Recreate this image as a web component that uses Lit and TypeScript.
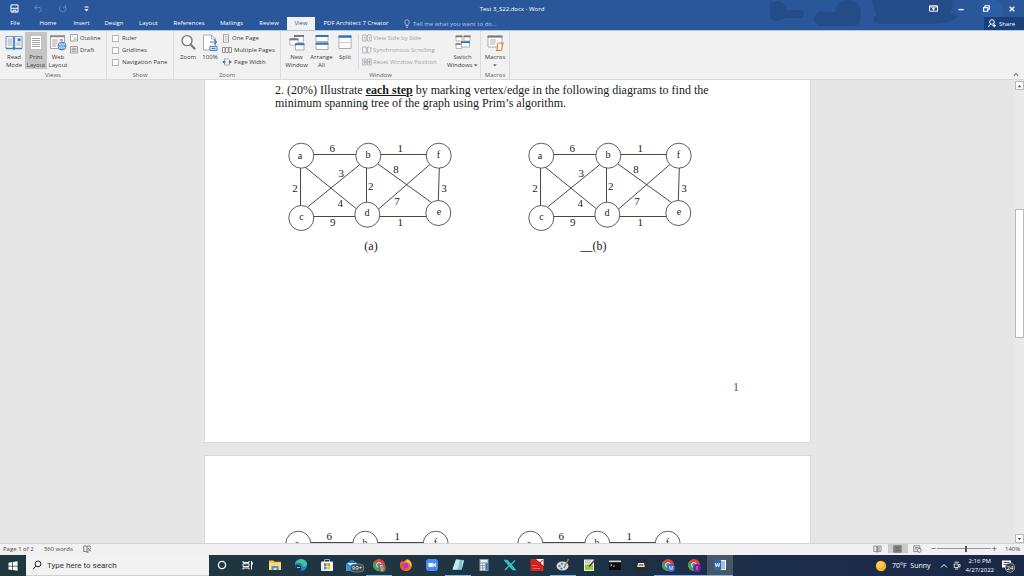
import { LitElement, html, svg, css, TemplateResult } from "lit";
import { customElement, property } from "lit/decorators.js";
import { classMap } from "lit/directives/class-map.js";

const icon = (w: number, h: number, body: unknown) =>
  html`<svg class="icon" width=${w} height=${h} viewBox="0 0 ${w} ${h}" aria-hidden="true">${body}</svg>`;

const I: Record<string, TemplateResult> = {
  save: icon(9, 9, svg`<path d="M1 .9h7v7.2H1z" fill="none" stroke="#fff"/><path d="M1 4.3h7M3 8V6.2h3V8" fill="none" stroke="#fff"/>`),
  undo: icon(10, 9, svg`<path d="M4 1L1.5 3.4 4 6M2 3.4h4a2 2 0 0 1 0 4.6" fill="none" stroke="#5f86c2"/>`),
  redo: icon(9, 9, svg`<path d="M7 2.2A3.3 3.3 0 1 1 3 1.8M4.8 3.8H7.4V.8" fill="none" stroke="#5f86c2"/>`),
  qat: icon(5, 6, svg`<path d="M.5 1h4" stroke="#fff"/><path d="M.5 3h4L2.5 5.4z" fill="#fff"/>`),
  ribbonOpts: icon(9, 7, svg`<path d="M.5.8h8v5.4h-8z" fill="none" stroke="#fff"/><path d="M1 2h7M4.5 5.4V3M3 4.2L4.5 3 6 4.2" stroke="#fff" fill="none"/>`),
  min: icon(6, 6, svg`<path d="M.5 3.6h5" stroke="#fff" stroke-width="1.4"/>`),
  restore: icon(7, 7, svg`<path d="M.6 2.6h4.2v3.6H.6zM2 2.4V.8h4.3v3.5H5" fill="none" stroke="#fff" stroke-width="1.1"/>`),
  close: icon(6, 6, svg`<path d="M.7.7l4.6 4.6M5.3.7L.7 5.3" stroke="#fff" stroke-width="1.3"/>`),
  share: icon(8, 9, svg`<circle cx="4" cy="3" r="2.3" fill="none" stroke="#fff"/><path d="M.6 8c.2-1.6 1.2-2.6 2.4-2.8M6.2 4.8v3.6M4.4 6.6H8" fill="none" stroke="#fff"/>`),
  bulb: icon(6, 9, svg`<path d="M2 5.6C.2 4 .6 .7 3 .7s2.8 3.300 1 4.900v1H2zM2 8.200h2" fill="none" stroke="#c3d2ea" stroke-width=".8"/>`),
  read: icon(18, 17, svg`<path d="M1 2.500h7.200v12H1zM9.800 2.500H17v12H9.800z" fill="#fff" stroke="#4a86c0" stroke-width=".8"/><path d="M1 14.500h16M9 2v14" stroke="#3f7fbf" stroke-width="1.400"/><path d="M2.500 5h4.500M2.500 7h4.500M2.500 9h4.500M2.500 11h4.500M11.200 9h4.500M11.200 11h4.500" stroke="#8b8b8b" stroke-width=".8"/><path d="M12.500 4.300h3.200v3h-3.200z" fill="#3f7fbf"/>`),
  print: icon(18, 17, svg`<path d="M3.500 1.500h11v14h-11z" fill="#fff" stroke="#b5b5b5" stroke-width=".7"/><path d="M5 4.500h8M5 6.500h8M5 8.500h8M5 10.500h8M5 12.500h8" stroke="#8b8b8b" stroke-width=".8"/>`),
  web: icon(18, 17, svg`<path d="M1.500 1.500h14v13h-14z" fill="#fff" stroke="#8f8f8f" stroke-width=".8"/><path d="M1 2.500h15" stroke="#8f8f8f" stroke-width="1.600"/><path d="M3 6h6M3 8h6M3 10h5M3 12h4" stroke="#8b8b8b" stroke-width=".8"/><path d="M10.500 5h3.500v2h-3.500z" fill="#aaa"/><circle cx="13" cy="12" r="4" fill="#fff" stroke="#3f7fbf"/><path d="M9 12h8M13 8v8M13 8c-3 3-3 5 0 8M13 8c3 3 3 5 0 8" fill="none" stroke="#3f7fbf" stroke-width=".8"/>`),
  outline: icon(8, 8, svg`<path d="M.5.5h7v6.500h-7z" fill="#fff" stroke="#8b8b8b" stroke-width=".8"/><path d="M1.800 2.400h1M3.600 4h3M3.600 5.400h3" stroke="#9b9b9b" stroke-width=".7"/>`),
  draft: icon(8, 8, svg`<path d="M.5.5h7v6.500h-7z" fill="#fff" stroke="#8b8b8b" stroke-width=".8"/><path d="M1.500 2.200h5M1.500 3.800h5M1.500 5.200h5" stroke="#8b8b8b"/>`),
  zoom: icon(18, 17, svg`<circle cx="8" cy="6.600" r="5" fill="#fafafa" stroke="#7b7b7b" stroke-width="1.400"/><path d="M11.600 10.400l4.600 4.800" stroke="#7b7b7b" stroke-width="2.200"/>`),
  hundred: icon(18, 17, svg`<path d="M2.500 1h8l4 4v11h-12z" fill="#fff" stroke="#9b9b9b" stroke-width=".8"/><path d="M10.500 1v4h4" fill="none" stroke="#9b9b9b" stroke-width=".8"/><path d="M9 8h6M13 5.500L15.500 8 13 10.500" fill="none" stroke="#3f7fbf" stroke-width="1.200"/><path d="M9 12.400h7v4H9z" fill="#fff" stroke="#3f7fbf"/><path d="M10.500 13.700h4v1.500h-4z" fill="#3f7fbf"/>`),
  onePage: icon(8, 9, svg`<path d="M1.500.6h5v7.600h-5z" fill="#fff" stroke="#8b8b8b" stroke-width=".8"/><path d="M2.600 2.500h3M2.600 4.200h3M2.600 6h3" stroke="#9b9b9b" stroke-width=".7"/>`),
  multi: icon(10, 8, svg`<path d="M.5 1.500h2.500v5H.5zM3.700 1.500h2.500v5H3.700zM7 1.500h2.500v5H7z" fill="#fff" stroke="#777" stroke-width=".8"/>`),
  pageWidth: icon(10, 8, svg`<path d="M2.600.8h3.600l1.300 1.400V7H2.600z" fill="#fff" stroke="#999" stroke-width=".8"/><path d="M3 2.400L.8 4 3 5.600M7 2.400L9.200 4 7 5.600M.8 4h3M6.400 4h2.800" fill="none" stroke="#2e6fb3" stroke-width=".9"/>`),
  newWin: icon(18, 17, svg`<path d="M6.500 1.500h9v7h-9z" fill="#fff" stroke="#aaa" stroke-width=".8"/><path d="M6 2h10" stroke="#777" stroke-width="2"/><path d="M2 5h8v6H2z" fill="#fff" stroke="#aaa" stroke-width=".8"/><path d="M1.600 5.300h9" stroke="#777" stroke-width="2"/><path d="M7.500 10h8.500v6H7.500z" fill="#fff" stroke="#999" stroke-width=".8"/><path d="M7 10.200h9.400" stroke="#2e75b6" stroke-width="2"/>`),
  arrange: icon(18, 17, svg`<path d="M3 1.500h12v6H3zM3 9.500h12v6H3z" fill="#fff" stroke="#999" stroke-width=".8"/><path d="M2.600 2h12.800M2.600 9.600h12.800" stroke="#2e75b6" stroke-width="2.200"/>`),
  split: icon(18, 17, svg`<path d="M3 2h12v12.500H3z" fill="#fff" stroke="#999" stroke-width=".8"/><path d="M2.600 2.600h12.800" stroke="#2e75b6" stroke-width="2.400"/><path d="M3.500 8.500h11" stroke="#c4c4c4" stroke-width=".8"/>`),
  side: icon(10, 8, svg`<path d="M.6 1h3.600v6H.6zM5.600 1h3.600v6H5.600z" fill="#f7f5f8" stroke="#aaa2ae" stroke-width=".8"/><path d="M2 3.500h1M7 3.500h1M2 5h1M7 5h1" stroke="#aaa2ae"/>`),
  sync: icon(10, 8, svg`<path d="M.6 1h3.600v6H.6zM7.800 1H5.600v6h2.200" fill="#f7f5f8" stroke="#aaa2ae" stroke-width=".8"/><path d="M8.800 1.500v5M8 2.500l.8-1.200.8 1.200" fill="none" stroke="#aaa2ae" stroke-width=".8"/>`),
  reset: icon(10, 8, svg`<path d="M.6 1h3.600v6H.6zM5.600 1h3.600v6H5.600z" fill="#f7f5f8" stroke="#aaa2ae" stroke-width=".8"/><path d="M2.500 2v4M7.400 2v4M1 4h8" stroke="#aaa2ae" stroke-width=".8"/>`),
  switchWin: icon(18, 17, svg`<path d="M2 2h6v5H2zM10 2h6v5h-6zM2 10h6v4.500H2z" fill="#fff" stroke="#aaa" stroke-width=".8"/><path d="M1.600 2.400h6.800M9.600 2.400h6.800M1.600 10h5" stroke="#777" stroke-width="1.600"/><path d="M7.500 8h8v5h-8z" fill="#fff" stroke="#999" stroke-width=".8"/><path d="M7 8.200h9" stroke="#2e75b6" stroke-width="1.800"/>`),
  macros: icon(18, 17, svg`<path d="M2 2h14v11H2z" fill="#fff" stroke="#999" stroke-width=".8"/><path d="M1.600 2.600h14.800" stroke="#777" stroke-width="2"/><path d="M4 6h6M4 8h6M4 10h5" stroke="#999" stroke-width=".8"/><path d="M12.500 9h4.500v1h-1v4.500c0 1.500-.8 2-1.500 2h-4.500c1.500-.5 1.500-1.500 1.500-2.500v-3.500c0-1 .4-1.500 1-1.500z" fill="#fff" stroke="#ed7d31" stroke-width="1.100"/>`),
  collapse: icon(6, 5, svg`<path d="M1 3.800L3 1.600l2 2.200" fill="none" stroke="#777" stroke-width="1.100"/>`),
  up: icon(5, 4, svg`<path d="M.6 3.200h3.800L2.500 1z" fill="#555"/>`),
  down: icon(5, 4, svg`<path d="M.6 1h3.800L2.500 3.200z" fill="#555"/>`),
  proof: icon(9, 8, svg`<path d="M4 1.500C3 .8 2 .8.800 1v5.500c1.200-.2 2.200 0 3.200.6zM4 1.500C5 .8 6 .8 7.200 1v1.500M4 7.200h1.500M5 3.200l3 3.300M8 3.200L5 6.500" fill="none" stroke="#555" stroke-width=".8"/>`),
  vRead: icon(9, 8, svg`<path d="M.800 1h3v5.600h-3zM5 1h3v5.600H5zM4.400 1v6.500" fill="none" stroke="#777" stroke-width=".8"/><path d="M6 3h1M6 5h1" stroke="#777"/>`),
  vPrint: icon(9, 8, svg`<path d="M.800.8h7.400v6.400H.8z" fill="#8a8a8a" stroke="#666" stroke-width=".8"/><path d="M2.400 2.500h4.200M2.400 4h4.200M2.400 5.500h4.200" stroke="#5a5a5a" stroke-width=".8"/>`),
  vWeb: icon(9, 8, svg`<path d="M.800.8h6v5.800h-6zM2 2.500h3.500M2 4h2.500" fill="none" stroke="#777" stroke-width=".8"/><circle cx="6.300" cy="5.300" r="1.900" fill="#f0f0f0" stroke="#666" stroke-width=".8"/>`),
  win: icon(10, 10, svg`<path d="M.5 1.700l3.800-.6v3.600H.5zM5 1l4.600-.7v4.400H5zM.5 5.400h3.800V9L.5 8.400zM5 5.400h4.600v4.400L5 9.100z" fill="#fff"/>`),
  search: icon(10, 10, svg`<circle cx="6" cy="3.900" r="2.900" fill="none" stroke="#222"/><path d="M3.900 6L1 9.200" stroke="#222"/>`),
  sun: icon(12, 12, svg`<circle cx="6" cy="6" r="5.200" fill="#fbb02a"/><circle cx="5" cy="4.800" r="3.400" fill="#ffcf4a"/>`),
  chevron: icon(8, 6, svg`<path d="M1 4.500L4 1.500l3 3" fill="none" stroke="#fff"/>`),
  meet: icon(8, 9, svg`<path d="M1.500 1.200h4.500M1.200 3h4v3.500h-4zM5.500 4l1.500-.8v3L5.500 5.500M2 8h3.500" fill="none" stroke="#fff" stroke-width=".8"/>`),
  notify: icon(15, 14, svg`<path d="M1 1.500h9v7H6L4 10.500v-2H1z" fill="#fff"/><path d="M2.500 3.500h6M2.500 5.500h5" stroke="#253451" stroke-width=".8"/><circle cx="9" cy="8.600" r="4.700" fill="#39424f" stroke="#b5bac2" stroke-width=".7"/><text x="9" y="10.800" font-size="6" text-anchor="middle" fill="#fff">24</text>`),
};

const caret = html`<svg class="caret" width="4" height="3" viewBox="0 0 4 3" aria-hidden="true"><path d="M0 .3h3.600L1.800 2.400z" fill="#666" /></svg>`;

const chrome = (badge: string, shade: string) => svg`
  <circle cx="7" cy="7" r="6" fill="#e94235"/>
  <path d="M7 7L1.800 4A6 6 0 0 0 6.500 13z" fill="#34a853"/>
  <path d="M7 7h6A6 6 0 0 1 6.500 13z" fill="#fbbc05"/>
  <circle cx="7" cy="7" r="2.700" fill="#fff"/><circle cx="7" cy="7" r="2.100" fill="#4285f4"/>
  <circle cx="10" cy="10" r="3.900" fill=${shade}/>
  ${badge
    ? svg`<text x="10" y="12" font-size="5" text-anchor="middle" fill="#fff">${badge}</text>`
    : svg`<path d="M8 7.500c2-1 3.500 0 4 2l-1 3.500H9.500z" fill="#d9cfc4"/><path d="M9 9h3M9.500 11h2" stroke="#4a3a30" stroke-width=".8"/>`}`;

type App = { name: string; art: unknown; running?: boolean; active?: boolean };
const APPS: App[] = [
  { name: "Cortana", art: svg`<circle cx="7" cy="7" r="3.600" fill="none" stroke="#fff" stroke-width="1.300"/>` },
  { name: "Task view", art: svg`<path d="M2 3v1.500h6V3M2 11.500V10h6v1.500M2 5.800h6v2.700H2zM10.500 3v8.500" fill="none" stroke="#fff"/><path d="M10 4.500h2v2h-2z" fill="#fff"/>` },
  { name: "File Explorer", art: svg`<path d="M1 2.500h4.500l1 1.200H13V12H1z" fill="#f6c64a"/><path d="M1 5h12v7H1z" fill="#ffdc7c"/><path d="M3.500 8h7v4h-2v-2h-3v2h-2z" fill="#4295d6"/>` },
  { name: "Edge", art: svg`<circle cx="7" cy="7" r="6.200" fill="#1c84d0"/><path d="M1.200 5.500C2.500.5 10.500-.8 12.800 5c.8 3-2 4-4.300 3.500C9.500 5.500 5 3.500 1.200 5.500z" fill="#44c98c"/><path d="M1 8c2-2.500 5-1.500 5 1s2 3.500 4 3C6 14.500 1.500 12 1 8z" fill="#0e4b8e"/><circle cx="4.500" cy="10" r="2.800" fill="#27313a"/><path d="M3 9.500h3" stroke="#ddd" stroke-width=".8"/>` },
  { name: "Microsoft Store", art: svg`<path d="M4.500 4V1.500h5V4" fill="none" stroke="#6ab7ee"/><rect x="1" y="3.500" width="12" height="9.500" rx="1" fill="#f5f5f5"/><path d="M4 5.300h2.600v2.600H4z" fill="#f25022"/><path d="M7.400 5.300H10v2.600H7.400z" fill="#7fba00"/><path d="M4 8.600h2.600v2.600H4z" fill="#00a4ef"/><path d="M7.400 8.600H10v2.600H7.400z" fill="#ffb900"/>` },
  { name: "Mail", art: svg`<path d="M0 5.500l6-4 6 4v7H0z" fill="#1976c6"/><path d="M1 5h10L6 9z" fill="#e8f3fb"/><path d="M0 6l6 4 6-4v7H0z" fill="#2b9be6"/><rect x="4" y="6" width="14" height="8" rx="4" fill="#3c4951" stroke="#9aa4aa" stroke-width=".6"/><text x="11" y="12.200" font-size="6" text-anchor="middle" fill="#fff">99+</text>` },
  { name: "Chrome", art: chrome("", "#8a6a50"), running: true },
  { name: "Firefox", art: svg`<path d="M7 1c1 1.500 2 2 3 2l.5-1c2 2 3 4.500 2.200 7-1 3-3.500 4-5.700 4-4 0-6-3-6-6 0-2 .8-3.500 2-4.500l.7 1.500C5 3.500 6 3 7 1z" fill="#ff7324"/><path d="M8.500 1c2.500 2 4.500 4 3.500 7.500C11 7 11 4.500 7 4z" fill="#ffca35"/><circle cx="7" cy="7.800" r="2.700" fill="#8a45d8"/><path d="M2 4c2 .5 3.500 1 4 2.500l-2 1.500c.5 2 3 3 5 1.500-1 3-6 3.500-7.500-.5z" fill="#f9433d"/>` },
  { name: "Zoom", art: svg`<rect x="1" y="1" width="12" height="12" rx="3" fill="#4a8cf7"/><path d="M3.500 5h5v4h-4a1 1 0 0 1-1-1zM9 6.500L11 5v4L9 7.800z" fill="#fff"/>` },
  { name: "Notepad", art: svg`<path d="M5 1.500l8 .5-2.500 10-9-.5z" fill="#7fc5cf"/><path d="M5 1.500l4 .3-2.500 9.700-5 .2z" fill="#c7e9e8"/><path d="M11.500 4l1.500-2-2.500 10z" fill="#eef"/>`, running: true },
  { name: "Calculator", art: svg`<path d="M2.500 1h9v12h-9z" fill="#8fa5b5"/><path d="M3.500 2h7v2.300h-7z" fill="#e6f3fb"/><path d="M3.500 5.500h1.700V7H3.500zM6.200 5.500h1.700V7H6.200zM3.500 8h1.700v1.500H3.500zM6.200 8h1.700v1.500H6.200zM3.500 10.500h1.700V12H3.500zM6.200 10.500h1.700V12H6.200z" fill="#f5f5f5"/><path d="M8.800 5.500h1.800V12H8.800z" fill="#2c7fc4"/>` },
  { name: "X", art: svg`<path d="M2 2.500h2l8 9h-2zM12 2.500L8 6.500M6 8l-4 4" fill="none" stroke="#2cc8cf" stroke-width="1.400"/>` },
  { name: "PDF Architect", art: svg`<path d="M.5 1h13v12H.5z" fill="#d8201f"/><path d="M6 1h7.500v7z" fill="#f3f3f3"/><path d="M6.500 2.500l6 5M12.500 2l-4 5" stroke="#b80f12"/><path d="M2 7.500h5M3 10.500h7" stroke="#ff7d72" stroke-width=".8"/>` },
  { name: "Paint", art: svg`<ellipse cx="6.500" cy="8" rx="6" ry="4.500" fill="#c9dff0"/><circle cx="3.500" cy="8" r="1.200" fill="#e05d3a"/><circle cx="6" cy="5.800" r="1.100" fill="#3f9a45"/><circle cx="5.500" cy="10.500" r="1.100" fill="#2d6fc0"/><circle cx="9" cy="6.500" r="1" fill="#e7b92c"/><path d="M12.500 1L8 10" stroke="#b47a3d" stroke-width="1.600"/>`, running: true },
  { name: "Notepad++", art: svg`<path d="M2 1.500h10V13H2z" fill="#f2f2e4"/><path d="M3 6.500h8V12H3z" fill="#8fd03a"/><path d="M3 3h6M3 4.800h5" stroke="#999" stroke-width=".7"/><path d="M12.500 2.500L7 8.500" stroke="#444" stroke-width="1.600"/>` },
  { name: "Command Prompt", art: svg`<path d="M1 2.500h12v9.500H1z" fill="#0b0b0b"/><path d="M1 2.500h12v1.700H1z" fill="#d9d9d9"/><path d="M2.500 6l1.500 1-1.500 1M5 8h2" fill="none" stroke="#ddd" stroke-width=".8"/>` },
  { name: "Console", art: svg`<path d="M.5 1h13v12H.5z" fill="#2a2a2c"/><path d="M4 5h6l.8 4H3.200z" fill="#e8e8e8"/><path d="M4.500 7h5" stroke="#2a2a2c"/>` },
  { name: "Chrome, profile M", art: chrome("M", "#4d63c9"), running: true },
  { name: "Chrome, profile I", art: chrome("I", "#7a1fa2"), running: true },
  { name: "Word", art: svg`<path d="M6 2h7v10H6z" fill="#fff"/><path d="M8 4h4M8 6h4M8 8h4M8 10h4" stroke="#2b579a" stroke-width=".8"/><path d="M1 2.500L8 1v12l-7-1.500z" fill="#2b67b8"/><path d="M2.300 5l1 4 1.200-4 1.200 4 1-4" fill="none" stroke="#fff" stroke-width=".9"/>`, running: true, active: true },
];

const NODES: [string, number, number, number, number][] = [
  ["a", 16.3, 15.7, 15, 18.5], ["b", 83.3, 15.7, 83, 17.5], ["f", 153.7, 15.7, 153.5, 17.5],
  ["c", 16.3, 78, 16.5, 80], ["d", 82.3, 74.7, 82, 76], ["e", 153.3, 73, 154, 74.5],
];
const EDGES = [
  [29, 14.5, 71, 14.5], [96, 14.5, 141, 14.5], [15.5, 28, 15.5, 65.5], [29, 76.5, 70, 76.5],
  [95, 76.5, 141, 76.5], [81.5, 28, 81.5, 62], [154.3, 28, 153.3, 61], [20.3, 27.3, 71.3, 68.7],
  [23, 66.7, 74.7, 24.7], [93, 24, 146.7, 62.7], [93.3, 69.3, 144.7, 24.7],
];
const WEIGHTS: [string, number, number][] = [
  ["6", 47.3, 12.3], ["1", 115.3, 12], ["3", 56.3, 37], ["8", 111, 32.7], ["2", 10, 52], ["2", 85.7, 49.5],
  ["3", 159, 51.7], ["4", 55.3, 66.5], ["7", 112, 64.7], ["9", 47.7, 86], ["1", 115.3, 86.3],
];

@customElement("spanning-graph")
class SpanningGraph extends LitElement {
  /** Draws only the upper row of vertices and the edges that join them. */
  @property({ type: Boolean }) upper = false;

  static styles = css`
    :host { display: block; }
    svg { display: block; }
    .shape { fill: #fff; stroke: #333; stroke-width: 0.8; }
    .edge { stroke: #333; stroke-width: 0.9; }
    .name, .weight { font: 11px "Liberation Serif", "Times New Roman", serif; text-anchor: middle; fill: #222; }
    .name { font-size: 10px; }
  `;
  render() {
    const edges = this.upper ? EDGES.slice(0, 2) : EDGES;
    const nodes = this.upper ? NODES.slice(0, 3) : NODES;
    const weights = this.upper ? WEIGHTS.slice(0, 2) : WEIGHTS;
    return html`<svg width="168" height="92" viewBox="0 0 168 92" role="img" aria-label="Weighted graph">
      ${edges.map(([x1, y1, x2, y2]) => svg`<line class="edge" x1=${x1} y1=${y1} x2=${x2} y2=${y2} />`)}
      ${nodes.map(([n, cx, cy, tx, ty]) => svg`<circle class="shape" cx=${cx} cy=${cy} r="12.5" /><text class="name" x=${tx} y=${ty}>${n}</text>`)}
      ${weights.map(([n, x, y]) => svg`<text class="weight" x=${x} y=${y}>${n}</text>`)}
    </svg>`;
  }
}

@customElement("app-root")
class AppRoot extends LitElement {
  @property() docTitle = "Test 3_S22.docx - Word";

  static styles = css`
    :host { display: flex; flex-direction: column; height: 100vh; overflow: hidden; background: #e6e6e6; color: #3b3b3b;
      font: 6px/8px "Open Sans", "Segoe UI", sans-serif; }
    * { box-sizing: border-box; }
    button, input { font: inherit; color: inherit; border: 0; padding: 0; margin: 0; background: none; }
    a { color: inherit; text-decoration: none; }
    .icon { display: block; flex: none; overflow: visible; }
    .caret { vertical-align: middle; }

    .head { position: relative; flex: none; background: #2a579a; color: #fff; border-bottom: 1px solid #b4c5de; }
    .clouds { position: absolute; right: 0; top: 0; }
    .title { position: relative; display: grid; grid-template-columns: 1fr auto 1fr; align-items: center; height: 17px; }
    .quick { display: grid; grid-template-columns: 23px 25px 26px auto; justify-content: start; align-items: center; padding-left: 10px; }
    .quick .pair { display: flex; align-items: center; gap: 2px; color: #5f86c2; }
    .caption { display: flex; justify-content: flex-end; align-items: center; gap: 19px; padding-right: 9px; }
    .caption button:first-child { margin-right: 1px; }
    .doc-title { margin: 0; font: inherit; }
    .tabs { position: relative; display: flex; height: 13px; }
    .tab-list { display: grid; grid-template-columns: 30px 36px 31px 34px 35px 46px 39px 36px 28px 82px; }
    .tab { line-height: 13px; text-align: center; white-space: nowrap; }
    .tab.on { background: #f1f1f1; color: #2a579a; }
    .tell { display: flex; align-items: center; gap: 3px; margin-left: 7px; flex: 1; }
    .tell input { width: 120px; }
    .tell input::placeholder { color: #b9c9e4; opacity: 1; }
    .share { display: flex; align-items: center; gap: 3px; padding: 0 9px 0 4px; background: #18417a; }

    .ribbon { flex: none; display: flex; background: #f1f1f1; height: 49px; border-bottom: 1px solid #d8d8d8; }
    .group { display: flex; flex-direction: column; border-right: 1px solid #dcdcdc; padding-top: 1px; }
    .body { display: flex; flex: 1; padding: 0 3px; }
    .group-name { height: 8px; line-height: 8px; text-align: center; color: #5c5c5c; }
    .w-views { width: 107px; } .w-show { width: 67px; } .w-zoom { width: 107px; } .w-window { width: 200px; } .w-macros { width: 29px; }
    .big { display: flex; flex-direction: column; align-items: center; width: 22px; height: 37px; gap: 2px; padding-top: 2px; white-space: nowrap; }
    .big.wide { width: 25px; }
    .big.broad { width: 29px; }
    .big.on { background: #c5c5c5; }
    .big .label { display: block; text-align: center; }
    .col { display: flex; flex-direction: column; }
    .col.after { padding-left: 1px; }
    .small { display: flex; align-items: center; gap: 2px; height: 12px; white-space: nowrap; }
    .small.off { color: #a5a5a5; gap: 1px; }
    .box { appearance: none; width: 7px; height: 7px; border: 1px solid #b5b5b5; background: #fff; }
    .checks { padding-left: 4px; }
    .checks .small { gap: 3px; }
    .scroll-col { flex: 1; }
    .sep { border-left: 1px solid #dcdcdc; margin: 2px 3px 2px 2px; }
    .fill { flex: 1; }
    .collapse { align-self: flex-end; margin: 0 5px 2px 0; }

    .work { flex: 1; min-height: 0; display: flex; }
    .canvas { flex: 1; overflow: hidden; display: flex; flex-direction: column; align-items: center; gap: 12px; }
    .page { flex: none; width: 607px; background: #fff; border: 1px solid #dadada; border-top: 0; color: #1a1a1a;
      font: 12px/13px "Liberation Serif", "Times New Roman", serif; }
    .first { height: 363px; padding: 4px 70px 0; }
    .page p { margin: 0; }
    .task { width: 450px; }
    .pair-row { display: flex; gap: 72px; }
    .first .pair-row { padding: 30px 0 0 10px; }
    .second { height: 363px; border-top: 1px solid #dadada; padding: 72px 0 0 77px; }
    .second .pair-row { gap: 64px; }
    .fig { margin: 0; }
    .fig figcaption { padding-top: 8px; text-align: center; padding-left: 4px; }
    .fig.b figcaption { padding: 8px 31px 0 0; }
    .gap { color: #3c3cd8; text-decoration: underline; white-space: pre; }
    .page-no { text-align: right; padding: 128px 1px 0 0; color: #555; }

    .vbar { width: 9px; display: flex; flex-direction: column; background: #e9e9e9; padding: 1px 0 0; }
    .vbar button { height: 9px; background: #fff; border: 1px solid #b9b9b9; display: grid; place-items: center; }
    .vbar .thumb { height: 129px; margin: 119px 0 auto; }

    .status { flex: none; display: flex; align-items: center; height: 12px; background: #f1f1f1; border-top: 1px solid #d5d5d5; padding: 0 0 2px 3px; color: #4a4a4a; }
    .status .words { margin: 0 10px; }
    .view { width: 20px; height: 9px; display: grid; place-items: center; }
    .view.on { background: #cbcbcb; }
    .slide { display: flex; align-items: center; margin: 0 8px 0 3px; font-size: 9px; }
    .range { appearance: none; width: 54px; height: 9px; margin: 0 1px; background: linear-gradient(#999, #999) center / 100% 1px no-repeat; }
    .range::-webkit-slider-thumb { appearance: none; width: 2px; height: 6px; background: #555; }
    .pct { width: 19px; }

    .bar { flex: none; display: flex; height: 21px; color: #fff; font-size: 7px; background: linear-gradient(90deg, #20373f, #1f3543 45%, #1c2d49 75%, #1b2848); }
    .start { width: 26px; display: grid; place-items: center; }
    .find { display: flex; align-items: center; gap: 5px; width: 183px; background: #f2f2f2; padding: 0 6px; border-bottom: 1px solid #cfcfcf; }
    .find input { flex: 1; min-width: 0; color: #333; font-family: Roboto, sans-serif; font-size: 8px; }
    .find input::placeholder { color: #333; opacity: 1; }
    .apps { display: flex; width: 524px; }
    .app { flex: 1; display: grid; place-items: center; border-bottom: 1px solid transparent; }
    .app.running { border-bottom-color: #76b9ed; }
    .app.active { background: #475768; }
    .tray { flex: 1; display: flex; justify-content: flex-end; align-items: center; gap: 5px; padding-right: 8px; white-space: nowrap; }
    .weather { display: flex; align-items: center; gap: 5px; margin-right: 4px; }
    .clock { font-size: 6px; line-height: 9px; text-align: center; margin-right: 2px; }
  `;

  private big(name: keyof typeof I, top: string, bottom: unknown = "", cls = {}) {
    return html`<button class=${classMap({ big: true, ...cls })}>${I[name]}<span class="label">${top}<br />${bottom}</span></button>`;
  }
  private small(name: keyof typeof I, text: string, off = false) {
    return html`<button class=${classMap({ small: true, off })} ?disabled=${off}>${I[name]}${text}</button>`;
  }

  render() {
    const tabs = ["File", "Home", "Insert", "Design", "Layout", "References", "Mailings", "Review", "View", "PDF Architect 7 Creator"];
    return html`
      <header class="head">
        <svg class="clouds" width="254" height="30" viewBox="0 0 254 30" aria-hidden="true">
          <g fill="#244c88">
            <circle cx="7" cy="11" r="10" /><rect x="0" y="10" width="34" height="8" rx="4" />
            <circle cx="52" cy="17" r="6" /><circle cx="78" cy="13" r="13" /><rect x="44" y="12" width="46" height="14" rx="7" />
            <path d="M102 0h80q2 8-3 14 8-1 8 3-4 7-34 7H108q-6-2-4-7 4-3 0-8z" />
          </g>
          <circle cx="222" cy="10" r="11" fill="#2d5da3" />
        </svg>
        <div class="title">
          <div class="quick">
            <button aria-label="Save">${I.save}</button>
            <span class="pair"><button aria-label="Undo">${I.undo}</button>-</span>
            <button aria-label="Redo">${I.redo}</button>
            <button aria-label="Customize toolbar">${I.qat}</button>
          </div>
          <h1 class="doc-title">${this.docTitle}</h1>
          <div class="caption">
            <button aria-label="Ribbon options">${I.ribbonOpts}</button>
            <button aria-label="Minimize">${I.min}</button>
            <button aria-label="Restore">${I.restore}</button>
            <button aria-label="Close">${I.close}</button>
          </div>
        </div>
        <div class="tabs">
          <nav class="tab-list">
            ${tabs.map((t) => html`<a href="#" class=${classMap({ tab: true, on: t === "View" })}>${t}</a>`)}
          </nav>
          <label class="tell">${I.bulb}<input aria-label="Tell me" placeholder="Tell me what you want to do..." /></label>
          <button class="share">${I.share}Share</button>
        </div>
      </header>

      <section class="ribbon">
        <div class="group w-views">
          <div class="body">
            ${this.big("read", "Read", "Mode")}${this.big("print", "Print", "Layout", { on: true })}${this.big("web", "Web", "Layout")}
            <div class="col after">${this.small("outline", "Outline")}${this.small("draft", "Draft")}</div>
          </div>
          <div class="group-name">Views</div>
        </div>
        <div class="group w-show">
          <div class="body checks">
            <div class="col after">
              ${["Ruler", "Gridlines", "Navigation Pane"].map((t) => html`<label class="small"><input class="box" type="checkbox" />${t}</label>`)}
            </div>
          </div>
          <div class="group-name">Show</div>
        </div>
        <div class="group w-zoom">
          <div class="body">
            ${this.big("zoom", "Zoom")}${this.big("hundred", "100%")}
            <div class="col after">${this.small("onePage", "One Page")}${this.small("multi", "Multiple Pages")}${this.small("pageWidth", "Page Width")}</div>
          </div>
          <div class="group-name">Zoom</div>
        </div>
        <div class="group w-window">
          <div class="body">
            ${this.big("newWin", "New", "Window", { wide: true })}${this.big("arrange", "Arrange", "All", { wide: true })}${this.big("split", "Split")}
            <span class="sep"></span>
            <div class="col scroll-col">${this.small("side", "View Side by Side", true)}${this.small("sync", "Synchronous Scrolling", true)}${this.small("reset", "Reset Window Position", true)}</div>
            ${this.big("switchWin", "Switch", html`Windows ${caret}`, { broad: true })}
          </div>
          <div class="group-name">Window</div>
        </div>
        <div class="group w-macros">
          <div class="body">${this.big("macros", "Macros", caret)}</div>
          <div class="group-name">Macros</div>
        </div>
        <div class="fill"></div>
        <button class="collapse" aria-label="Collapse the ribbon">${I.collapse}</button>
      </section>

      <main class="work">
        <div class="canvas">
          <article class="page first">
            <p class="task">2. (20%) Illustrate <b><u>each step</u></b> by marking vertex/edge in the following diagrams to find the minimum spanning tree of the graph using Prim’s algorithm.</p>
            <div class="pair-row">
              <figure class="fig"><spanning-graph></spanning-graph><figcaption>(a)</figcaption></figure>
              <figure class="fig b"><spanning-graph></spanning-graph><figcaption><span class="gap">    </span>(b)</figcaption></figure>
            </div>
            <p class="page-no">1</p>
          </article>
          <article class="page second">
            <div class="pair-row"><spanning-graph upper></spanning-graph><spanning-graph upper></spanning-graph></div>
          </article>
        </div>
        <div class="vbar">
          <button aria-label="Scroll up">${I.up}</button>
          <button class="thumb" aria-label="Scroll position"></button>
          <button aria-label="Scroll down">${I.down}</button>
        </div>
      </main>

      <footer class="status">
        <span>Page 1 of 2</span><span class="words">360 words</span>${I.proof}
        <div class="fill"></div>
        <button class="view" aria-label="Read mode">${I.vRead}</button>
        <button class="view on" aria-label="Print layout">${I.vPrint}</button>
        <button class="view" aria-label="Web layout">${I.vWeb}</button>
        <span class="slide"><button aria-label="Zoom out">−</button><input class="range" type="range" aria-label="Zoom" min="10" max="270" value="150" /><button aria-label="Zoom in">+</button></span>
        <span class="pct">140%</span>
      </footer>

      <div class="bar">
        <button class="start" aria-label="Start">${I.win}</button>
        <label class="find">${I.search}<input aria-label="Search" placeholder="Type here to search" /></label>
        <div class="apps">
          ${APPS.map((a) => html`<button class=${classMap({ app: true, running: !!a.running, active: !!a.active })} aria-label=${a.name}>${icon(14, 14, a.art)}</button>`)}
        </div>
        <div class="tray">
          <span class="weather">${I.sun}<span>70°F&nbsp; Sunny</span></span>
          ${I.chevron}${I.meet}
          <span class="clock">2:16 PM<br />4/27/2022</span>
          ${I.notify}
        </div>
      </div>
    `;
  }
}
